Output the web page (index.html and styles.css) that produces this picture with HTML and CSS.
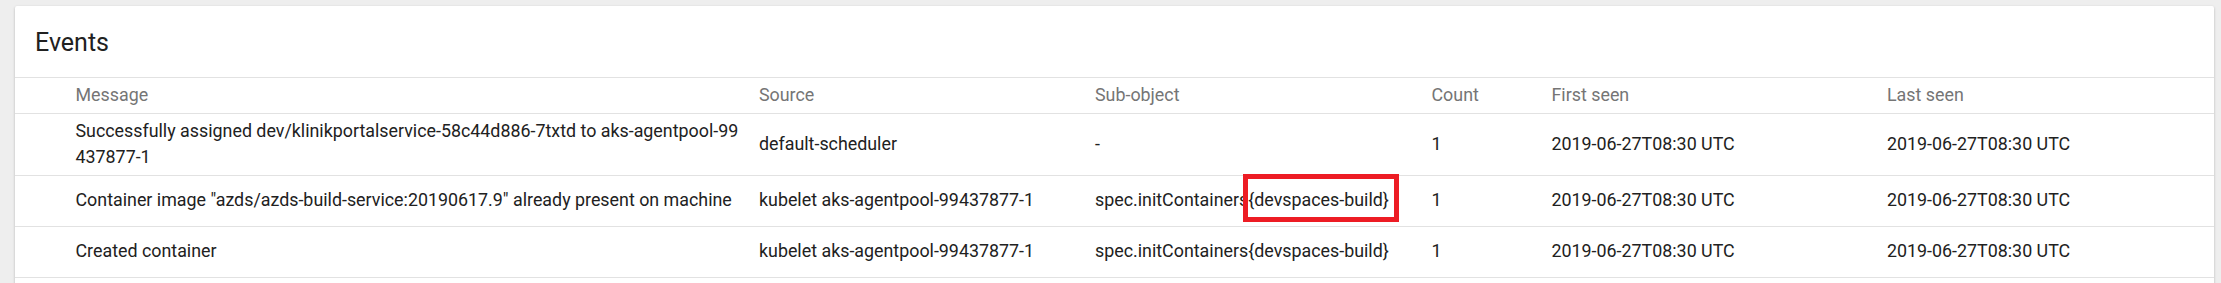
FILE: index.html
```html
<!DOCTYPE html>
<html lang="en">
<head>
<meta charset="utf-8">
<title>Events</title>
<link rel="stylesheet" href="styles.css">
</head>
<body>
<div class="page">
  <section class="card">
    <header class="card-title">Events</header>
    <div class="table">
      <div class="row head">
        <div class="cell msg">Message</div>
        <div class="cell">Source</div>
        <div class="cell">Sub-object</div>
        <div class="cell">Count</div>
        <div class="cell">First seen</div>
        <div class="cell">Last seen</div>
      </div>
      <div class="row">
        <div class="cell msg">Successfully assigned dev/klinikportalservice-58c44d886-7txtd to aks-agentpool-99437877-1</div>
        <div class="cell">default-scheduler</div>
        <div class="cell">-</div>
        <div class="cell">1</div>
        <div class="cell">2019-06-27T08:30 UTC</div>
        <div class="cell">2019-06-27T08:30 UTC</div>
      </div>
      <div class="row">
        <div class="cell msg">Container image "azds/azds-build-service:20190617.9" already present on machine</div>
        <div class="cell">kubelet aks-agentpool-99437877-1</div>
        <div class="cell"><span>spec.initContainers<span class="hl">{devspaces-build}</span></span></div>
        <div class="cell">1</div>
        <div class="cell">2019-06-27T08:30 UTC</div>
        <div class="cell">2019-06-27T08:30 UTC</div>
      </div>
      <div class="row">
        <div class="cell msg">Created container</div>
        <div class="cell">kubelet aks-agentpool-99437877-1</div>
        <div class="cell">spec.initContainers{devspaces-build}</div>
        <div class="cell">1</div>
        <div class="cell">2019-06-27T08:30 UTC</div>
        <div class="cell">2019-06-27T08:30 UTC</div>
      </div>
    </div>
  </section>
</div>
</body>
</html>
```

FILE: styles.css
```css
* { box-sizing: border-box; }

html, body {
  margin: 0;
  background: #eeeeee;
}

body {
  font-family: Roboto, "Liberation Sans", Arial, sans-serif;
  color: #212121;
}

.page {
  padding: 6px 7px 0 15px;
}

.card {
  background: #ffffff;
  border-radius: 2px;
  box-shadow: 0 1px 3px rgba(0, 0, 0, 0.2), 0 1px 1px rgba(0, 0, 0, 0.12);
  min-height: 290px;
}

.card-title {
  font-size: 25px;
  line-height: 30px;
  font-weight: 400;
  color: #212121;
  padding: 22px 20px 19px 20px;
  border-bottom: 1px solid #e2e2e2;
}

.row {
  display: grid;
  grid-template-columns: 683.5px 336px 336.5px 120px 335.5px 1fr;
  padding-left: 60.5px;
  min-height: 51px;
  border-bottom: 1px solid #e2e2e2;
  font-size: 17.85px;
  line-height: 26.25px;
}

.row.head {
  min-height: 36px;
  color: #757575;
}

.cell {
  display: flex;
  align-items: center;
  padding: 4px 14.5px 4px 0;
}

.cell.msg {
  word-break: break-all;
}

.hl {
  position: relative;
}

.hl::after {
  content: "";
  position: absolute;
  left: -5px;
  right: -10px;
  top: -15px;
  bottom: -12px;
  border: 5px solid #ed1c24;
}
```
